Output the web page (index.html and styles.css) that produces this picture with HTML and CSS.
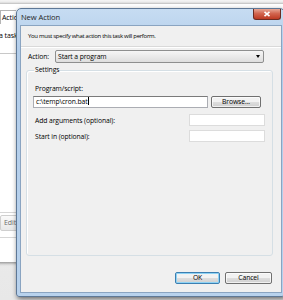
FILE: index.html
```html
<!DOCTYPE html>
<html lang="en">
<head>
    <meta charset="UTF-8">
    <title>New Action</title>
    <link rel="stylesheet" href="styles.css">
</head>
<body>
    <div class="desktop">
        <!-- window behind the dialog, only its left strip shows -->
        <div class="back-window">
            <div class="back-strip">
                <div class="back-tabs">
                    <span class="back-tab">Actions</span>
                </div>
                <div class="back-text">a task</div>
                <div class="back-rule"></div>
                <div class="back-spacer"></div>
                <div class="back-buttons">
                    <span class="back-btn">Edit...</span>
                </div>
            </div>
        </div>

        <div class="dialog">
            <div class="title-bar">
                <span class="title">New Action</span>
                <span class="close-btn">
                    <svg width="8" height="6" viewBox="0 0 8 6">
                        <path d="M1.5 0.8 L6.5 5.2 M6.5 0.8 L1.5 5.2" stroke="#fff" stroke-width="1.6"/>
                    </svg>
                </span>
            </div>
            <div class="client">
                <div class="intro">You must specify what action this task will perform.</div>
                <div class="separator"></div>
                <div class="action-row">
                    <span class="action-label">Action:</span>
                    <div class="select">
                        <span>Start a program</span>
                        <span class="arrow"></span>
                    </div>
                </div>
                <fieldset class="settings">
                    <legend>Settings</legend>
                    <div class="field-label">Program/script:</div>
                    <div class="program-row">
                        <div class="input wide">c:\temp\cron.bat<span class="caret"></span></div>
                        <div class="btn browse">Browse...</div>
                    </div>
                    <div class="opt-row">
                        <span>Add arguments (optional):</span>
                        <div class="input short"></div>
                    </div>
                    <div class="opt-row">
                        <span>Start in (optional):</span>
                        <div class="input short"></div>
                    </div>
                </fieldset>
                <div class="footer">
                    <div class="btn ok">OK</div>
                    <div class="btn cancel">Cancel</div>
                </div>
            </div>
        </div>
    </div>
</body>
</html>
```

FILE: styles.css
```css
body{
    margin: 0;
    background-color: #ebebeb;
    font-family: "Open Sans", "Noto Sans", sans-serif;
    font-size: 6.8px;
    letter-spacing: -0.1px;
    color: #000;
}

.desktop{
    position: relative;
    width: 283px;
    height: 300px;
    overflow: hidden;
    background: linear-gradient(#f4f4f4, #e8e8e8);
}

/* background window */
.back-window{
    position: absolute;
    left: -20px;
    top: 3px;
    width: 320px;
    height: 258px;
    background-color: #fff;
    border-top: 1px solid #c9c9c9;
    box-shadow: 0 1px 3px rgba(0, 0, 0, 0.45);
}
.back-strip{
    width: 36px;
    height: 100%;
    overflow: hidden;
    display: flex;
    flex-direction: column;
    font-size: 7px;
}
.back-tabs{
    height: 14px;
    margin-top: 6px;
    padding-left: 20px;
    display: flex;
}
.back-tab{
    border: 1px solid #b5b5b5;
    border-bottom: none;
    padding: 0 4px 0 1px;
    line-height: 13px;
    white-space: nowrap;
}
.back-text{
    margin-top: 7px;
    padding-left: 19px;
    line-height: 10px;
    white-space: nowrap;
}
.back-rule{
    margin-top: 12px;
    height: 1px;
    background-color: #c8c8c8;
}
.back-spacer{
    flex: 1;
}
.back-buttons{
    border-top: 1px solid #d6d6d6;
    border-bottom: 1px solid #d6d6d6;
    height: 24px;
    padding-left: 20px;
    margin-bottom: 24px;
    white-space: nowrap;
}
.back-btn{
    display: inline-block;
    margin-top: 2px;
    padding: 0 6px 0 3px;
    line-height: 14px;
    color: #6d6d6d;
    border: 1px solid #cfcfcf;
    border-radius: 2px;
    background: linear-gradient(#fafafa, #e8e8e8);
}

/* dialog */
.dialog{
    position: absolute;
    left: 16px;
    top: 8px;
    width: 262px;
    height: 284px;
    border: 1px solid #5e7896;
    border-radius: 5px 5px 3px 3px;
    background: linear-gradient(#c6dcf2, #b2cdea 40px, #b8d2ed);
    box-shadow: 1px 2px 5px rgba(0, 0, 0, 0.55);
    display: flex;
    flex-direction: column;
    padding: 0 2px 3px 3px;
}
.title-bar{
    height: 16px;
    display: flex;
    align-items: flex-start;
    justify-content: space-between;
}
.title{
    padding-left: 1px;
    line-height: 16px;
    font-size: 7.6px;
    color: #1e1e1e;
}
.close-btn{
    width: 26px;
    height: 10px;
    margin-right: 1px;
    border: 1px solid #6b2c22;
    border-top: none;
    border-radius: 0 0 3px 3px;
    background: linear-gradient(#e7a796, #d26650 45%, #bd3a22);
    display: flex;
    align-items: center;
    justify-content: center;
}
.client{
    flex: 1;
    background-color: #f0f0f0;
    border: 1px solid #8aa4c1;
    display: flex;
    flex-direction: column;
}
.intro{
    padding: 5px 0 0 7px;
    line-height: 10px;
    font-size: 6px;
    letter-spacing: -0.3px;
}
.separator{
    margin-top: 5px;
    height: 1px;
    background-color: #d9d9d9;
    border-bottom: 1px solid #fff;
}
.action-row{
    margin-top: 2px;
    display: flex;
    align-items: center;
    padding-left: 7px;
}
.action-label{
    width: 27px;
}
.select{
    width: 202px;
    height: 11px;
    border: 1px solid #8e8f8f;
    border-radius: 2px;
    background: linear-gradient(#f6f6f6, #dedede);
    display: flex;
    align-items: center;
    justify-content: space-between;
    padding: 0 3px 0 2px;
    line-height: 11px;
}
.arrow{
    width: 0;
    height: 0;
    border-left: 2.5px solid transparent;
    border-right: 2.5px solid transparent;
    border-top: 3px solid #000;
}
.settings{
    margin: 3px 8px 0 5px;
    padding: 0 7px 0 8px;
    height: 188px;
    border: 1px solid #d5dfe5;
    border-radius: 3px;
    box-shadow: inset 1px 1px 0 #fff;
}
.settings legend{
    padding: 0 1px;
    margin-left: -1px;
    line-height: 8px;
}
.field-label{
    margin-top: 10px;
    line-height: 10px;
}
.program-row{
    margin-top: 2px;
    display: flex;
    align-items: center;
    margin-left: -2px;
}
.input{
    height: 10px;
    border: 1px solid #abadb3;
    border-top-color: #7a7a7a;
    background-color: #fff;
    line-height: 10px;
    padding-left: 2px;
}
.wide{
    width: 171px;
}
.caret{
    display: inline-block;
    width: 1px;
    height: 8px;
    margin-left: 0.5px;
    background-color: #000;
    vertical-align: -1px;
}
.short{
    width: 74px;
    padding-left: 0;
    border-color: #dcdcdc;
}
.btn{
    height: 10px;
    border: 1px solid #707070;
    border-radius: 2px;
    background: linear-gradient(#f2f2f2 45%, #dddddd 55%, #cfcfcf);
    text-align: center;
    line-height: 10px;
    box-shadow: inset 0 0 0 1px rgba(255, 255, 255, 0.7);
}
.browse{
    width: 48px;
    margin-left: 3px;
}
.opt-row{
    display: flex;
    justify-content: space-between;
    align-items: center;
    margin-top: 4px;
}
.opt-row:nth-of-type(3){
    margin-top: 6px;
}
.footer{
    margin-top: auto;
    margin-bottom: 8px;
    display: flex;
    justify-content: flex-end;
    gap: 5px;
    padding-right: 9px;
}
.ok{
    width: 43px;
    border-color: #3c7fb1;
    box-shadow: inset 0 0 0 1px #8fd3f5;
}
.cancel{
    width: 45px;
}
```
